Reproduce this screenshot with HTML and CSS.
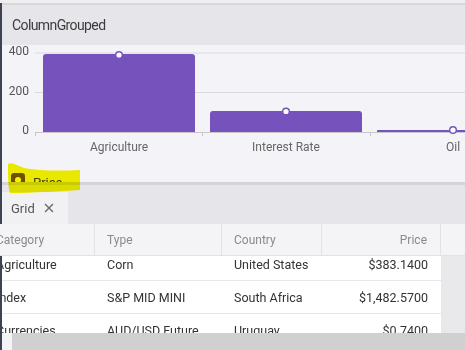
FILE: index.html
```html
<!DOCTYPE html>
<html lang="en">
<head>
    <meta charset="UTF-8">
    <title>ColumnGrouped</title>
    <link rel="stylesheet" href="styles.css">
</head>
<body>
    <div class="shell">
        <div class="rail"></div>
        <div class="main">
            <section class="chart-panel">
                <header class="panel-head">ColumnGrouped</header>
                <div class="chart-body">
                    <svg class="chart" width="463" height="128" viewBox="2 45 463 128">
                        <g class="grid-lines">
                            <line x1="35" y1="53" x2="465" y2="53"/>
                            <line x1="35" y1="92.5" x2="465" y2="92.5"/>
                        </g>
                        <g class="y-labels">
                            <text x="29" y="55">400</text>
                            <text x="29" y="95">200</text>
                            <text x="29" y="134">0</text>
                        </g>
                        <path class="bar" d="M43,132 V57 Q43,54 46,54 H192 Q195,54 195,57 V132 Z"/>
                        <path class="bar" d="M210,132 V114 Q210,111 213,111 H359 Q362,111 362,114 V132 Z"/>
                        <path class="bar" d="M377,132 V130.5 Q377,130 378,130 H470 V132 Z"/>
                        <g class="axis">
                            <line x1="35" y1="132.5" x2="465" y2="132.5"/>
                            <line x1="35.5" y1="132" x2="35.5" y2="136"/>
                            <line x1="202.5" y1="132" x2="202.5" y2="136"/>
                            <line x1="370.5" y1="132" x2="370.5" y2="136"/>
                        </g>
                        <g class="markers">
                            <circle cx="119" cy="55" r="3.3"/>
                            <circle cx="286" cy="111.5" r="3.3"/>
                            <circle cx="453" cy="130" r="3.3"/>
                        </g>
                        <g class="x-labels">
                            <text x="119" y="151">Agriculture</text>
                            <text x="286" y="151">Interest Rate</text>
                            <text x="453" y="151">Oil</text>
                        </g>
                    </svg>
                    <div class="legend">
                        <span class="swatch"></span>
                        <span>Price</span>
                    </div>
                </div>
            </section>

            <section class="grid-panel">
                <div class="tabs">
                    <div class="tab">
                        <span>Grid</span>
                        <svg class="close" width="10" height="10" viewBox="0 0 10 10">
                            <path d="M1,1 L9,9 M9,1 L1,9"/>
                        </svg>
                    </div>
                </div>

                <div class="grid-row grid-head">
                    <div class="cell">Category</div>
                    <div class="cell">Type</div>
                    <div class="cell">Country</div>
                    <div class="cell num">Price</div>
                    <div class="cell filler"></div>
                </div>

                <div class="grid-body">
                    <div class="grid-rows">
                        <div class="grid-row">
                            <div class="cell">Agriculture</div>
                            <div class="cell">Corn</div>
                            <div class="cell">United States</div>
                            <div class="cell num">$383.1400</div>
                            <div class="cell filler"></div>
                        </div>
                        <div class="grid-row">
                            <div class="cell">Index</div>
                            <div class="cell">S&amp;P MID MINI</div>
                            <div class="cell">South Africa</div>
                            <div class="cell num">$1,482.5700</div>
                            <div class="cell filler"></div>
                        </div>
                        <div class="grid-row">
                            <div class="cell">Currencies</div>
                            <div class="cell">AUD/USD Future</div>
                            <div class="cell">Uruguay</div>
                            <div class="cell num">$0.7400</div>
                            <div class="cell filler"></div>
                        </div>
                    </div>
                </div>

                <div class="hscroll"><div class="thumb"></div></div>
            </section>
        </div>
    </div>

    <svg class="highlight" width="90" height="40" viewBox="0 158 90 40">
        <path d="M8,164 C12,162 16,165 24,168 C40,171 60,171 80,170 L80,190 C60,191 35,193 10,193 C8,187 8,175 8,164 Z"/>
    </svg>
</body>
</html>
```

FILE: styles.css
```css
* {
    box-sizing: border-box;
}
body {
    margin: 0;
    width: 465px;
    height: 350px;
    overflow: hidden;
    position: relative;
    background-color: #efeff2;
    font-family: Roboto, 'Noto Sans', sans-serif;
}
.shell {
    display: flex;
    height: 347px;
    margin-top: 3px;
}
.rail {
    width: 2px;
    flex: none;
    background-color: #3d4351;
}
.main {
    flex: 1;
    min-width: 0;
    display: flex;
    flex-direction: column;
}

/* chart panel */
.chart-panel {
    border-top: 2px solid #d6d6db;
    border-bottom: 3px solid #d3d3d8;
}
.panel-head {
    height: 40px;
    padding-left: 10px;
    display: flex;
    align-items: center;
    background-color: #e5e5ea;
    font-size: 14px;
    letter-spacing: -0.6px;
    color: #3c3c3c;
}
.chart-body {
    height: 137px;
    overflow: hidden;
    background-color: #f4f3f8;
}
.chart {
    display: block;
}
.grid-lines line {
    stroke: #dadade;
    stroke-width: 1;
}
.axis line {
    stroke: #c6c6cb;
    stroke-width: 1;
}
.bar {
    fill: #7652bd;
}
.markers circle {
    fill: #fff;
    stroke: #7652bd;
    stroke-width: 1.4;
}
.y-labels text {
    font-size: 12px;
    fill: #555;
    text-anchor: end;
}
.x-labels text {
    font-size: 12px;
    fill: #666;
    text-anchor: middle;
}
.legend {
    display: flex;
    align-items: flex-start;
    gap: 8px;
    padding-left: 9px;
    line-height: 20px;
    font-size: 13px;
    color: #444;
}
.swatch {
    width: 14px;
    height: 14px;
    border-radius: 3px;
    background-color: #7652bd;
    display: flex;
    align-items: center;
    justify-content: center;
}
.swatch::after {
    content: '';
    width: 6px;
    height: 6px;
    border-radius: 50%;
    background-color: #fff;
}

/* grid panel */
.grid-panel {
    flex: 1;
    display: flex;
    flex-direction: column;
    min-height: 0;
}
.tabs {
    height: 39px;
    padding-top: 7px;
    background-color: #e5e5ea;
    display: flex;
}
.tab {
    width: 66px;
    height: 32px;
    padding-left: 9px;
    display: flex;
    align-items: center;
    gap: 9px;
    background-color: #f1f1f4;
    font-size: 13px;
    color: #555;
}
.close path {
    stroke: #666;
    stroke-width: 1.3;
    fill: none;
}
.grid-row {
    display: grid;
    grid-template-columns: 111px 127px 100px 119px 24px;
    margin-left: -18px;
}
.cell {
    padding: 0 12px;
    display: flex;
    align-items: center;
    white-space: nowrap;
    overflow: hidden;
}
.cell.num {
    justify-content: flex-end;
    padding-right: 13px;
}
.grid-head {
    height: 32px;
    background-color: #f4f4f7;
    border-bottom: 1px solid #e2e2e6;
    font-size: 12px;
    color: #8a8a8a;
}
.grid-head .cell {
    border-right: 1px solid #e2e2e6;
}
.grid-head .cell.filler {
    border-right: none;
}
.grid-body {
    height: 77px;
    overflow: hidden;
}
.grid-rows {
    margin-top: -8px;
}
.grid-rows .grid-row {
    height: 33px;
    background-color: #fff;
    border-bottom: 1px solid #e8e8ec;
    font-size: 12.5px;
    color: #333;
}
.grid-rows .cell.filler {
    background-color: #e9e9ec;
}
.hscroll {
    height: 17px;
    padding-left: 10px;
    background-color: #f4f4f6;
    display: flex;
}
.thumb {
    flex: 1;
    background-color: #d0d0d0;
}

/* marker highlight drawn over the legend */
.highlight {
    position: absolute;
    left: 0;
    top: 158px;
    mix-blend-mode: multiply;
}
.highlight path {
    fill: #f4f400;
}
```
